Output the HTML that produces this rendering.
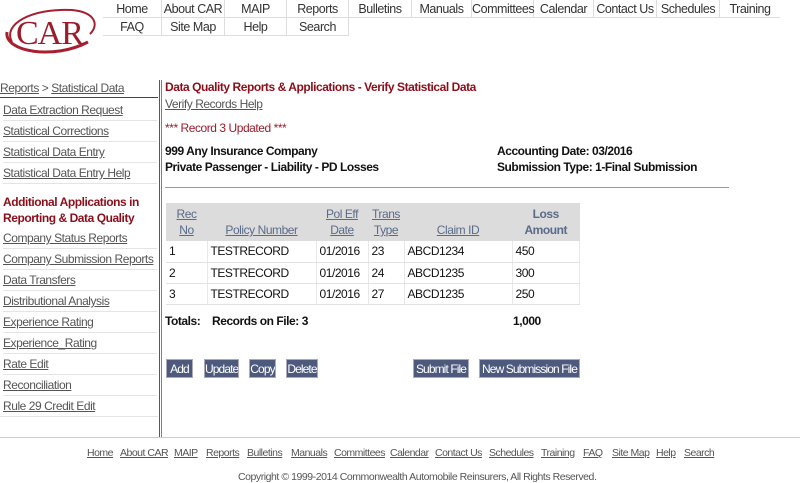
<!DOCTYPE html>
<html><head><meta charset="utf-8"><style>
*{margin:0;padding:0;box-sizing:border-box}
body{width:800px;height:483px;background:#fff;font-family:"Liberation Sans",Arial,sans-serif;font-size:12px;letter-spacing:-0.45px;color:#111;position:relative;overflow:hidden}
.a{position:absolute;white-space:nowrap}
.nav{position:absolute;top:0;height:18px;border-right:1px solid #ddd;border-bottom:1px solid #ddd;text-align:center;line-height:18px;color:#333;font-size:12.5px}
.u{color:#555;text-decoration:underline}
.side{position:absolute;left:3px;width:154px;height:21px;line-height:20px;border-bottom:1px solid #e4e4e4;color:#555;text-decoration:underline;font-size:12px;white-space:nowrap}
.red{color:#8b0e1a;font-weight:bold}
.btn{position:absolute;top:359px;height:19px;background:#4e5a7d;color:#fff;line-height:18px;text-align:center;font-size:12px;border:1px solid #aab;white-space:nowrap;letter-spacing:-0.9px;overflow:hidden}
td{height:21px;padding-left:3px;border-bottom:1px solid #e2e2e2;border-right:1px solid #e8e8e8}
th{font-weight:normal;color:#5a6a8a;text-decoration:underline;vertical-align:bottom;padding-bottom:3px;line-height:16px;background:#dcdcdc}
.f{position:absolute;top:447px;font-size:10.5px;color:#555;text-decoration:underline;white-space:nowrap;letter-spacing:-0.5px}
</style></head><body>
<svg class="a" style="left:2px;top:2px" width="100" height="56" viewBox="0 0 100 56">
<path d="M10 40 C0 22 30 6 70 8 C92 10 98 22 88 32" fill="none" stroke="#a62030" stroke-width="2"/>
<path d="M5 30 C2 50 52 58 86 40" fill="none" stroke="#a62030" stroke-width="3"/>
<text x="14" y="42" font-family="Liberation Serif,serif" font-size="34" fill="#9b1c2c" letter-spacing="-1">CAR</text>
</svg>
<div class="nav" style="left:103px;width:59px">Home</div>
<div class="nav" style="left:162px;width:63px">About CAR</div>
<div class="nav" style="left:225px;width:62px">MAIP</div>
<div class="nav" style="left:287px;width:62px">Reports</div>
<div class="nav" style="left:349px;width:63px">Bulletins</div>
<div class="nav" style="left:412px;width:60px">Manuals</div>
<div class="nav" style="left:472px;width:62px">Committees</div>
<div class="nav" style="left:534px;width:60px">Calendar</div>
<div class="nav" style="left:594px;width:63px">Contact Us</div>
<div class="nav" style="left:657px;width:63px">Schedules</div>
<div class="nav" style="left:720px;width:60px;border-right:none">Training</div>
<div class="nav" style="top:18px;left:103px;width:59px">FAQ</div>
<div class="nav" style="top:18px;left:162px;width:63px">Site Map</div>
<div class="nav" style="top:18px;left:225px;width:62px">Help</div>
<div class="nav" style="top:18px;left:287px;width:62px">Search</div>

<div class="a" style="left:0;top:80px;width:158px;border-bottom:1px solid #9b1c2c;line-height:17px;color:#555"><span class="u">Reports</span> &gt; <span class="u">Statistical Data</span></div>
<div class="side" style="top:100px">Data Extraction Request</div>
<div class="side" style="top:121px">Statistical Corrections</div>
<div class="side" style="top:142px">Statistical Data Entry</div>
<div class="side" style="top:163px">Statistical Data Entry Help</div>
<div class="a red" style="left:3px;top:194px;line-height:16px">Additional Applications in<br>Reporting &amp; Data Quality</div>
<div class="side" style="top:228px">Company Status Reports</div>
<div class="side" style="top:249px">Company Submission Reports</div>
<div class="side" style="top:270px">Data Transfers</div>
<div class="side" style="top:291px">Distributional Analysis</div>
<div class="side" style="top:312px">Experience Rating</div>
<div class="side" style="top:333px">Experience_Rating</div>
<div class="side" style="top:354px">Rate Edit</div>
<div class="side" style="top:375px">Reconciliation</div>
<div class="side" style="top:396px">Rule 29 Credit Edit</div>
<div class="a" style="left:0;top:416px;width:158px;border-bottom:1px solid #e4e4e4;height:1px"></div>
<div class="a" style="left:159px;top:80px;width:3px;height:357px;border-left:1px solid #b03040;border-right:1px solid #c06070"></div>

<div class="a red" style="left:165px;top:80px">Data Quality Reports &amp; Applications - Verify Statistical Data</div>
<div class="a u" style="left:165px;top:97px">Verify Records Help</div>
<div class="a" style="left:165px;top:121px;color:#9b1c2c">*** Record 3 Updated ***</div>
<div class="a" style="left:165px;top:143px;font-weight:bold;line-height:16px">999 Any Insurance Company<br>Private Passenger - Liability - PD Losses</div>
<div class="a" style="left:497px;top:143px;font-weight:bold;line-height:16px">Accounting Date: 03/2016<br>Submission Type: 1-Final Submission</div>
<div class="a" style="left:165px;top:187px;width:564px;border-top:1px solid #999"></div>

<table class="a" style="left:166px;top:203px;width:414px;border-collapse:collapse">
<tr style="height:38px"><th style="width:41px">Rec<br>No</th><th style="width:109px">Policy Number</th><th style="width:52px">Pol Eff<br>Date</th><th style="width:36px">Trans<br>Type</th><th style="width:108px">Claim ID</th><th style="text-decoration:none;font-weight:bold">Loss<br>Amount</th></tr>
<tr><td>1</td><td>TESTRECORD</td><td>01/2016</td><td>23</td><td>ABCD1234</td><td>450</td></tr>
<tr><td>2</td><td>TESTRECORD</td><td>01/2016</td><td>24</td><td>ABCD1235</td><td>300</td></tr>
<tr><td>3</td><td>TESTRECORD</td><td>01/2016</td><td>27</td><td>ABCD1235</td><td>250</td></tr>
</table>
<div class="a" style="left:165px;top:314px;font-weight:bold">Totals:</div>
<div class="a" style="left:212px;top:314px;font-weight:bold">Records on File: 3</div>
<div class="a" style="left:513px;top:314px;font-weight:bold">1,000</div>

<div class="btn" style="left:166px;width:27px">Add</div>
<div class="btn" style="left:204px;width:35px">Update</div>
<div class="btn" style="left:249px;width:27px">Copy</div>
<div class="btn" style="left:286px;width:32px">Delete</div>
<div class="btn" style="left:413px;width:56px">Submit File</div>
<div class="btn" style="left:479px;width:101px">New Submission File</div>

<div class="a" style="left:0;top:437px;width:800px;border-top:1px solid #ccc"></div>
<span class="f" style="left:87px">Home</span>
<span class="f" style="left:120px">About CAR</span>
<span class="f" style="left:174px">MAIP</span>
<span class="f" style="left:206px">Reports</span>
<span class="f" style="left:247px">Bulletins</span>
<span class="f" style="left:291px">Manuals</span>
<span class="f" style="left:334px">Committees</span>
<span class="f" style="left:390px">Calendar</span>
<span class="f" style="left:435px">Contact Us</span>
<span class="f" style="left:489px">Schedules</span>
<span class="f" style="left:541px">Training</span>
<span class="f" style="left:583px">FAQ</span>
<span class="f" style="left:612px">Site Map</span>
<span class="f" style="left:656px">Help</span>
<span class="f" style="left:684px">Search</span>
<div class="a" style="left:238px;top:471px;font-size:10.5px;color:#555">Copyright © 1999-2014 Commonwealth Automobile Reinsurers, All Rights Reserved.</div>
</body></html>
